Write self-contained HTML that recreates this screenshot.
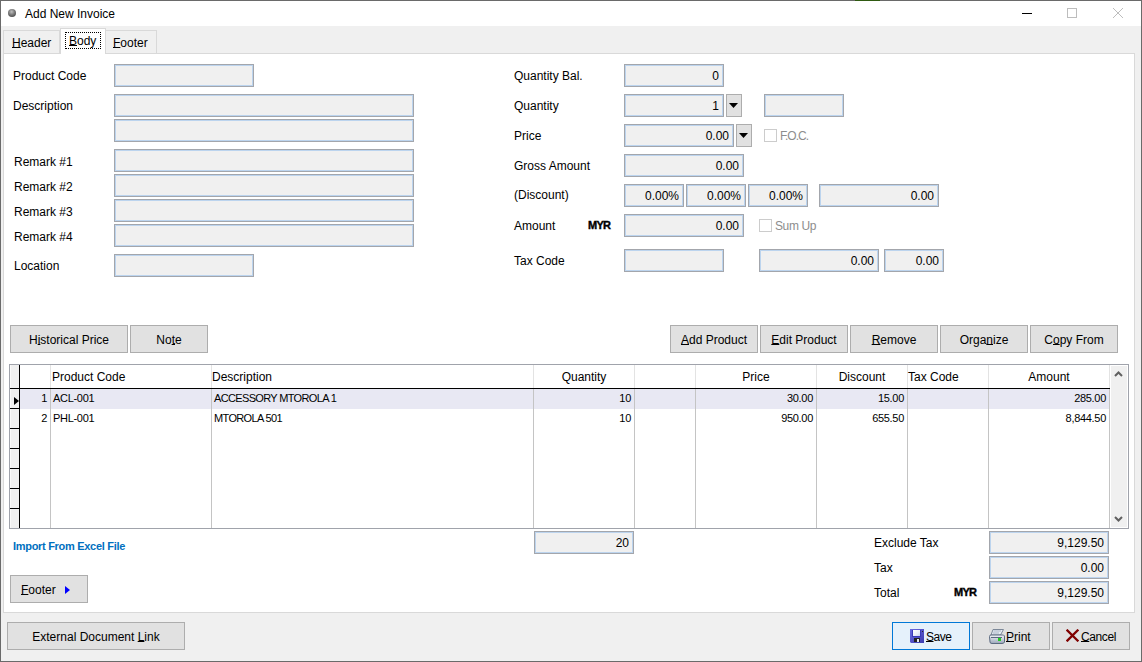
<!DOCTYPE html><html><head><meta charset="utf-8"><style>
*{margin:0;padding:0;box-sizing:border-box}
html,body{width:1142px;height:662px;overflow:hidden;background:#f0f0f0;font-family:"Liberation Sans",sans-serif;font-size:12px;color:#000}
.a{position:absolute}
.t{position:absolute;white-space:nowrap;line-height:14px;font-size:12px}
.box{position:absolute;border:1px solid #a3a6ac;background:#f0f0f0;box-shadow:inset 0 0 0 1px #bcd4ee}
.box span{position:absolute;right:4px;top:4px;line-height:14px;font-size:12px;white-space:nowrap}
.btn{position:absolute;border:1px solid #adadad;background:#e1e1e1;text-align:center;line-height:28px;white-space:nowrap}
u{text-decoration:underline;text-decoration-thickness:1px;text-underline-offset:0px}
.grid .c{position:absolute;white-space:nowrap;font-size:11px;line-height:14px;letter-spacing:-0.3px}
</style></head><body><div class="a" style="left:0;top:0;width:1142px;height:662px;border:1px solid #6a6a6a"></div>
<div class="a" style="left:855px;top:0;width:25px;height:1px;background:#2f5a12"></div>
<div class="a" style="left:1px;top:1px;width:1140px;height:25px;background:#fff"></div>
<div class="a" style="left:8px;top:9px;width:8px;height:8px;border-radius:50%;background:radial-gradient(circle at 45% 35%,#c0c0c0 0,#808080 40%,#303030 100%)"></div>
<div class="t " style="left:25px;top:7px;font-size:12px">Add New Invoice</div>
<div class="a" style="left:1022px;top:13px;width:10px;height:1px;background:#000"></div>
<div class="a" style="left:1067px;top:8px;width:10px;height:10px;border:1px solid #bdbdbd"></div>
<svg class="a" style="left:1112px;top:7px" width="12" height="12" viewBox="0 0 12 12"><path d="M1 1L11 11M11 1L1 11" stroke="#bdbdbd" stroke-width="1" fill="none"/></svg>
<div class="a" style="left:3px;top:30px;width:57px;height:24px;border:1px solid #d9d9d9;border-bottom:none;background:#f0f0f0"></div>
<div class="a" style="left:105px;top:30px;width:52px;height:24px;border:1px solid #d9d9d9;border-bottom:none;background:#f0f0f0"></div>
<div class="a" style="left:3px;top:53px;width:1132px;height:560px;border:1px solid #d9d9d9;background:#fff"></div>
<div class="a" style="left:60px;top:28px;width:46px;height:26px;border:1px solid #d9d9d9;border-bottom:none;background:#fff"></div>
<div class="a" style="left:65px;top:32px;width:36px;height:17px;border:1px dotted #000"></div>
<div class="t " style="left:12px;top:36px;"><u>H</u>eader</div>
<div class="t " style="left:69px;top:34px;"><u>B</u>ody</div>
<div class="t " style="left:113px;top:36px;"><u>F</u>ooter</div>
<div class="t " style="left:13px;top:69px;">Product Code</div>
<div class="box " style="left:114px;top:64px;width:140px;height:23px"></div>
<div class="t " style="left:13px;top:99px;">Description</div>
<div class="box " style="left:114px;top:94px;width:300px;height:23px"></div>
<div class="box " style="left:114px;top:119px;width:300px;height:23px"></div>
<div class="t " style="left:14px;top:155px;">Remark #1</div>
<div class="box " style="left:114px;top:149px;width:300px;height:23px"></div>
<div class="t " style="left:14px;top:180px;">Remark #2</div>
<div class="box " style="left:114px;top:174px;width:300px;height:23px"></div>
<div class="t " style="left:14px;top:205px;">Remark #3</div>
<div class="box " style="left:114px;top:199px;width:300px;height:23px"></div>
<div class="t " style="left:14px;top:230px;">Remark #4</div>
<div class="box " style="left:114px;top:224px;width:300px;height:23px"></div>
<div class="t " style="left:14px;top:259px;">Location</div>
<div class="box " style="left:114px;top:254px;width:140px;height:23px"></div>
<div class="t " style="left:514px;top:69px;">Quantity Bal.</div>
<div class="box " style="left:624px;top:64px;width:100px;height:23px"><span>0</span></div>
<div class="t " style="left:514px;top:99px;">Quantity</div>
<div class="box " style="left:624px;top:94px;width:100px;height:23px"><span>1</span></div>
<div class="a" style="left:726px;top:94px;width:16px;height:23px;border:1px solid #adadad;background:#e1e1e1"></div>
<svg class="a" style="left:729px;top:103px" width="9" height="5"><path d="M0 0H9L4.5 5Z" fill="#000"/></svg>
<div class="box " style="left:764px;top:94px;width:80px;height:23px"></div>
<div class="t " style="left:514px;top:129px;">Price</div>
<div class="box " style="left:624px;top:124px;width:110px;height:23px"><span>0.00</span></div>
<div class="a" style="left:736px;top:124px;width:16px;height:23px;border:1px solid #adadad;background:#e1e1e1"></div>
<svg class="a" style="left:739px;top:133px" width="9" height="5"><path d="M0 0H9L4.5 5Z" fill="#000"/></svg>
<div class="a" style="left:764px;top:129px;width:13px;height:13px;border:1px solid #cccccc;background:#fff"></div>
<div class="t " style="left:780px;top:129px;color:#8d8d8d;letter-spacing:-1px">F.O.C.</div>
<div class="t " style="left:514px;top:159px;">Gross Amount</div>
<div class="box " style="left:624px;top:154px;width:120px;height:23px"><span>0.00</span></div>
<div class="t " style="left:514px;top:188px;">(Discount)</div>
<div class="box " style="left:624px;top:184px;width:60px;height:23px"><span>0.00%</span></div>
<div class="box " style="left:686px;top:184px;width:60px;height:23px"><span>0.00%</span></div>
<div class="box " style="left:748px;top:184px;width:60px;height:23px"><span>0.00%</span></div>
<div class="box " style="left:819px;top:184px;width:120px;height:23px"><span>0.00</span></div>
<div class="t " style="left:514px;top:219px;">Amount</div>
<div class="t " style="left:588px;top:218px;font-weight:bold;font-size:11px;letter-spacing:-0.7px;-webkit-text-stroke:0.4px #000">MYR</div>
<div class="box " style="left:624px;top:214px;width:120px;height:23px"><span>0.00</span></div>
<div class="a" style="left:759px;top:219px;width:13px;height:13px;border:1px solid #cccccc;background:#fff"></div>
<div class="t " style="left:775px;top:219px;color:#8d8d8d;letter-spacing:-0.4px">Sum Up</div>
<div class="t " style="left:514px;top:254px;">Tax Code</div>
<div class="box " style="left:624px;top:249px;width:100px;height:23px"></div>
<div class="box " style="left:759px;top:249px;width:120px;height:23px"><span>0.00</span></div>
<div class="box " style="left:884px;top:249px;width:60px;height:23px"><span>0.00</span></div>
<div class="btn " style="left:10px;top:325px;width:118px;height:28px;">H<u>i</u>storical Price</div>
<div class="btn " style="left:130px;top:325px;width:78px;height:28px;">No<u>t</u>e</div>
<div class="btn " style="left:670px;top:325px;width:88px;height:28px;"><u>A</u>dd Product</div>
<div class="btn " style="left:760px;top:325px;width:88px;height:28px;"><u>E</u>dit Product</div>
<div class="btn " style="left:850px;top:325px;width:88px;height:28px;"><u>R</u>emove</div>
<div class="btn " style="left:940px;top:325px;width:88px;height:28px;">Orga<u>n</u>ize</div>
<div class="btn " style="left:1030px;top:325px;width:88px;height:28px;">C<u>o</u>py From</div>
<div class="grid">
<div class="a" style="left:9px;top:364px;width:1120px;height:165px;border:1px solid #a0a3ab;background:#fff"></div>
<div class="a" style="left:10px;top:365px;width:9px;height:163px;background:#f0f0f0"></div>
<div class="a" style="left:19px;top:365px;width:1px;height:163px;background:#000"></div>
<div class="a" style="left:10px;top:365px;width:1px;height:163px;background:#fafafa"></div>
<div class="a" style="left:10px;top:388px;width:9px;height:1px;background:#000"></div>
<div class="a" style="left:10px;top:408px;width:9px;height:1px;background:#000"></div>
<div class="a" style="left:10px;top:428px;width:9px;height:1px;background:#000"></div>
<div class="a" style="left:10px;top:448px;width:9px;height:1px;background:#000"></div>
<div class="a" style="left:10px;top:468px;width:9px;height:1px;background:#000"></div>
<div class="a" style="left:10px;top:488px;width:9px;height:1px;background:#000"></div>
<div class="a" style="left:10px;top:508px;width:9px;height:1px;background:#000"></div>
<div class="a" style="left:20px;top:388px;width:1090px;height:1px;background:#000"></div>
<div class="a" style="left:20px;top:389px;width:1090px;height:20px;background:#e8e8f3"></div>
<svg class="a" style="left:14px;top:397px" width="5" height="8"><path d="M0 0L5 4L0 8Z" fill="#000"/></svg>
<div class="a" style="left:50px;top:365px;width:1px;height:23px;background:#e3e3e3"></div>
<div class="a" style="left:50px;top:389px;width:1px;height:139px;background:#c4c4c4"></div>
<div class="a" style="left:211px;top:365px;width:1px;height:23px;background:#e3e3e3"></div>
<div class="a" style="left:211px;top:389px;width:1px;height:139px;background:#c4c4c4"></div>
<div class="a" style="left:533px;top:365px;width:1px;height:23px;background:#e3e3e3"></div>
<div class="a" style="left:533px;top:389px;width:1px;height:139px;background:#c4c4c4"></div>
<div class="a" style="left:634px;top:365px;width:1px;height:23px;background:#e3e3e3"></div>
<div class="a" style="left:634px;top:389px;width:1px;height:139px;background:#c4c4c4"></div>
<div class="a" style="left:695px;top:365px;width:1px;height:23px;background:#e3e3e3"></div>
<div class="a" style="left:695px;top:389px;width:1px;height:139px;background:#c4c4c4"></div>
<div class="a" style="left:816px;top:365px;width:1px;height:23px;background:#e3e3e3"></div>
<div class="a" style="left:816px;top:389px;width:1px;height:139px;background:#c4c4c4"></div>
<div class="a" style="left:907px;top:365px;width:1px;height:23px;background:#e3e3e3"></div>
<div class="a" style="left:907px;top:389px;width:1px;height:139px;background:#c4c4c4"></div>
<div class="a" style="left:988px;top:365px;width:1px;height:23px;background:#e3e3e3"></div>
<div class="a" style="left:988px;top:389px;width:1px;height:139px;background:#c4c4c4"></div>
<div class="a" style="left:1109px;top:365px;width:1px;height:23px;background:#e3e3e3"></div>
<div class="a" style="left:1109px;top:389px;width:1px;height:139px;background:#c4c4c4"></div>
<div class="a" style="left:1111px;top:366px;width:16px;height:161px;background:#f0f0f0"></div>
<svg class="a" style="left:1114px;top:370px" width="9" height="7"><path d="M1 6L4.5 2.5L8 6" stroke="#606060" stroke-width="2" fill="none"/></svg>
<svg class="a" style="left:1114px;top:516px" width="9" height="7"><path d="M1 1L4.5 4.5L8 1" stroke="#606060" stroke-width="2" fill="none"/></svg>
<div class="t" style="left:52px;top:370px">Product Code</div>
<div class="t" style="left:212px;top:370px">Description</div>
<div class="t" style="left:534px;top:370px;width:100px;text-align:center">Quantity</div>
<div class="t" style="left:696px;top:370px;width:120px;text-align:center">Price</div>
<div class="t" style="left:817px;top:370px;width:90px;text-align:center">Discount</div>
<div class="t" style="left:908px;top:370px">Tax Code</div>
<div class="t" style="left:989px;top:370px;width:120px;text-align:center">Amount</div>
<div class="c" style="right:1095px;top:391px">1</div>
<div class="c" style="left:53px;top:391px">ACL-001</div>
<div class="c" style="left:214px;top:391px;letter-spacing:-0.65px">ACCESSORY MTOROLA 1</div>
<div class="c" style="right:511px;top:391px">10</div>
<div class="c" style="right:329px;top:391px">30.00</div>
<div class="c" style="right:238px;top:391px">15.00</div>
<div class="c" style="right:36px;top:391px">285.00</div>
<div class="c" style="right:1095px;top:411px">2</div>
<div class="c" style="left:53px;top:411px">PHL-001</div>
<div class="c" style="left:214px;top:411px;letter-spacing:-0.65px">MTOROLA 501</div>
<div class="c" style="right:511px;top:411px">10</div>
<div class="c" style="right:329px;top:411px">950.00</div>
<div class="c" style="right:238px;top:411px">655.50</div>
<div class="c" style="right:36px;top:411px">8,844.50</div>
</div>
<div class="t " style="left:13px;top:539px;font-weight:bold;color:#0070c0;font-size:11px;letter-spacing:-0.3px">Import From Excel File</div>
<div class="box " style="left:534px;top:531px;width:100px;height:23px"><span>20</span></div>
<div class="t " style="left:874px;top:536px;">Exclude Tax</div>
<div class="box " style="left:989px;top:531px;width:120px;height:23px"><span>9,129.50</span></div>
<div class="t " style="left:874px;top:561px;">Tax</div>
<div class="box " style="left:989px;top:556px;width:120px;height:23px"><span>0.00</span></div>
<div class="t " style="left:874px;top:586px;">Total</div>
<div class="t " style="left:954px;top:585px;font-weight:bold;font-size:11px;letter-spacing:-0.7px;-webkit-text-stroke:0.4px #000">MYR</div>
<div class="box " style="left:989px;top:581px;width:120px;height:23px"><span>9,129.50</span></div>
<div class="btn " style="left:10px;top:575px;width:78px;height:28px;"><span style="position:absolute;left:10px;top:0"><u>F</u>ooter</span><svg style="position:absolute;left:54px;top:10px" width="5" height="8"><path d="M0 0L5 4L0 8Z" fill="#0000ff"/></svg></div>
<div class="btn " style="left:7px;top:622px;width:178px;height:28px;">External Document <u>L</u>ink</div>
<div class="btn " style="left:892px;top:622px;width:78px;height:28px;background:#e5f1fb;border-color:#0078d7"></div>
<div class="btn " style="left:972px;top:622px;width:78px;height:28px;"></div>
<div class="btn " style="left:1052px;top:622px;width:78px;height:28px;"></div>
<svg class="a" style="left:910px;top:629px" width="14" height="14" viewBox="0 0 14 14">
<defs><linearGradient id="fg" x1="0" y1="0" x2="1" y2="1"><stop offset="0" stop-color="#6a6ae0"/><stop offset="1" stop-color="#3c3cb0"/></linearGradient>
<linearGradient id="lg" x1="0" y1="0" x2="1" y2="1"><stop offset="0" stop-color="#ffffff"/><stop offset="0.6" stop-color="#e8ecf8"/><stop offset="1" stop-color="#c8d0f0"/></linearGradient></defs>
<path d="M0 0H14V14H1L0 13Z" fill="url(#fg)"/>
<rect x="2" y="1" width="9" height="7" fill="#3a3ab8"/>
<rect x="3" y="1" width="7" height="6" fill="url(#lg)"/>
<rect x="4" y="9" width="6" height="4" fill="#222"/>
<rect x="7" y="10" width="2" height="3" fill="#e8e8f0"/>
<rect x="12" y="2" width="1" height="1" fill="#222"/>
</svg>
<div class="t" style="left:926px;top:630px;letter-spacing:-0.5px"><u>S</u>ave</div>
<svg class="a" style="left:989px;top:629px" width="16" height="15" viewBox="0 0 16 15">
<defs><linearGradient id="pg" x1="0" y1="0" x2="0" y2="1"><stop offset="0" stop-color="#f4f6fa"/><stop offset="1" stop-color="#9aa6b8"/></linearGradient></defs>
<path d="M4 0.5H14.5L11.5 6H2Z" fill="#e8ecf4" stroke="#7c8898" stroke-width="1"/>
<path d="M4.5 2H12M4 4H10" stroke="#a8b4c4" stroke-width="1"/>
<path d="M0.5 7.5Q0.5 6 2 6H14.5Q15.5 6.5 15.5 8V13Q15 14.5 13 14.5H3Q1 14.5 1 13Z" fill="url(#pg)" stroke="#5c6a80" stroke-width="1"/>
<path d="M2 8.5H13" stroke="#5c6a80" stroke-width="1"/>
<rect x="9" y="9" width="3" height="3" fill="#22cc22"/>
</svg>
<div class="t" style="left:1006px;top:630px"><u>P</u>rint</div>
<svg class="a" style="left:1066px;top:629px" width="13" height="13" viewBox="0 0 13 13"><path d="M1.5 1.5L11.5 11.5M11.5 1.5L1.5 11.5" stroke="#800000" stroke-width="2.3" fill="none" stroke-linecap="square"/></svg>
<div class="t" style="left:1081px;top:630px;letter-spacing:-0.4px"><u>C</u>ancel</div></body></html>
